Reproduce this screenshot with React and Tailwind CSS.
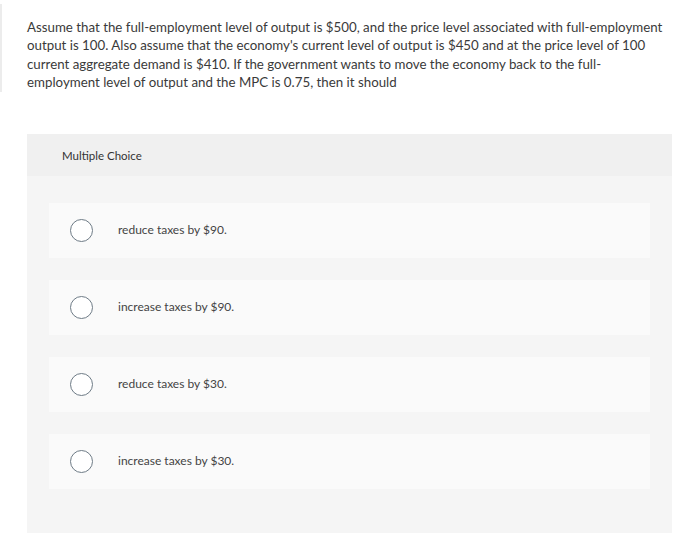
import React from 'react';

const options = [
  'reduce taxes by $90.',
  'increase taxes by $90.',
  'reduce taxes by $30.',
  'increase taxes by $30.',
];

const lines = [
  'Assume that the full-employment level of output is $500, and the price level associated with full-employment',
  "output is 100. Also assume that the economy's current level of output is $450 and at the price level of 100",
  'current aggregate demand is $410. If the government wants to move the economy back to the full-',
  'employment level of output and the MPC is 0.75, then it should',
];

export default function App() {
  return (
    <div className="relative w-[700px] h-[540px] bg-white text-[#333]" style={{ fontFamily: 'Lato, "Open Sans", sans-serif' }}>
      <div className="absolute left-0 top-[4px] h-[88px] w-[2px] bg-[#ececec]" />
      <div className="pl-[27px] pt-[18px]">
        {lines.map((l) => (
          <div key={l} className="text-[13.3px] leading-[18.4px] whitespace-nowrap text-[#3a3a3a]">{l}</div>
        ))}
      </div>

      <div className="ml-[27px] mt-[42px] w-[645px] h-[399px] bg-[#f5f5f5] flex flex-col">
        <div className="h-[42px] bg-[#f0f0f0] flex items-center pl-[35px] pt-[2px] text-[11.5px] text-[#333]">
          Multiple Choice
        </div>
        <div className="flex flex-col gap-[22px] px-[22px] pt-[27px]">
          {options.map((opt) => (
            <div key={opt} className="h-[55px] bg-[#fafafa] flex items-center pl-[21px]">
              <span className="w-[23px] h-[23px] rounded-full border-[1.5px] border-[#6e7b86] bg-white shrink-0" />
              <span className="ml-[25px] text-[12px] text-[#444]">{opt}</span>
            </div>
          ))}
        </div>
      </div>
    </div>
  );
}
